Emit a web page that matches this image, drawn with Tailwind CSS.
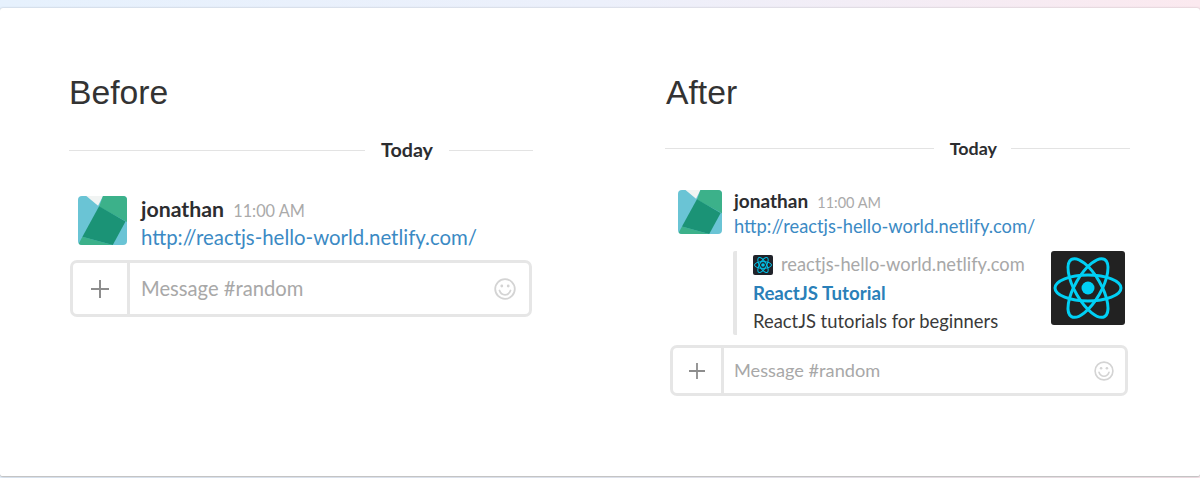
<!DOCTYPE html>
<html lang="en">
<head>
  <meta charset="UTF-8" />
  <title>Before and After</title>
  <script src="https://cdn.jsdelivr.net/npm/@tailwindcss/browser@4"></script>
</head>
<body class="w-[1200px] h-[478px] overflow-hidden bg-gradient-to-r from-[#e6f1fd] via-[#ecf0fb] to-[#fbe9ef] font-['Lato',sans-serif]">
  <div class="mt-2 h-[469px] bg-white rounded-[3px] border-b border-[#c4c4c4] shadow-[0_0_2px_rgba(0,0,0,0.25)] flex">

    <!-- Before -->
    <section class="w-[596px] pl-[69px] pt-[64px] shrink-0">
      <h2 class="font-['Liberation_Sans',sans-serif] text-[33.7px] leading-[40px] text-[#333]">Before</h2>

      <div class="flex items-center w-[464px] mt-[28px] h-[20px]">
        <div class="flex-1 border-t border-[#e3e3e3]"></div>
        <span class="px-4 text-[19.7px] font-bold text-[#2c2d30]">Today</span>
        <div class="w-[84px] border-t border-[#e3e3e3]"></div>
      </div>

      <div class="flex ml-[9px] mt-[36px]">
        <svg class="w-[49px] h-[49px] shrink-0 rounded-[4px]" viewBox="0 0 100 100">
          <rect width="100" height="100" fill="#6ac4d5" />
          <polygon points="17,0 51,0 41,20" fill="#f1f4f3" />
          <polygon points="51,0 100,0 100,53 43,22" fill="#3cb18a" />
          <polygon points="0,100 71,100 9,83" fill="#3cb18a" />
          <polygon points="43,21 97,52 71,100 9,83" fill="#1b9376" />
        </svg>
        <div class="ml-[14px]">
          <div class="leading-[26px] whitespace-nowrap">
            <span class="text-[21.3px] font-bold text-[#2c2d30]">jonathan</span>
            <span class="ml-[5px] text-[16.3px] text-[#aaa]">11:00 AM</span>
          </div>
          <div class="text-[20.4px] leading-[27px] text-[#3b8ac4] whitespace-nowrap">http://reactjs-hello-world.netlify.com/</div>
        </div>
      </div>

      <div class="flex items-stretch w-[462px] h-[57px] ml-[1px] mt-[9px] border-[3px] border-[#e6e6e6] rounded-[7px]">
        <div class="w-[57px] border-r-[3px] border-[#e6e6e6] flex items-center justify-center shrink-0">
          <svg class="w-5 h-5" viewBox="0 0 20 20"><path d="M10 1v18M1 10h18" stroke="#8d8d8d" stroke-width="2" /></svg>
        </div>
        <div class="flex-1 flex items-center pl-[11px] pr-[13px] text-[20.2px] text-[#a8a8a8]">
          <span class="flex-1">Message #random</span>
          <svg class="w-[22px] h-[22px]" viewBox="0 0 22 22" fill="none" stroke="#d4d4d4" stroke-width="1.8">
            <circle cx="11" cy="11" r="9.8" />
            <path d="M5.5 12.5c1 3 3.2 4.3 5.5 4.3s4.500-1.300 5.500-4.300" stroke-linecap="round" />
            <circle cx="7.800" cy="8" r="1.400" fill="#d4d4d4" stroke="none" />
            <circle cx="14.200" cy="8" r="1.400" fill="#d4d4d4" stroke="none" />
          </svg>
        </div>
      </div>
    </section>

    <!-- After -->
    <section class="flex-1 pt-[64px]">
      <h2 class="ml-[70px] font-['Liberation_Sans',sans-serif] text-[33.7px] leading-[40px] text-[#333]">After</h2>

      <div class="flex items-center w-[465px] ml-[69px] mt-[26px] h-[20px]">
        <div class="flex-1 border-t border-[#e3e3e3]"></div>
        <span class="pl-4 pr-[14px] text-[17.9px] font-bold text-[#2c2d30]">Today</span>
        <div class="w-[119px] border-t border-[#e3e3e3]"></div>
      </div>

      <div class="flex ml-[82px] mt-[32px]">
        <svg class="w-[44px] h-[44px] shrink-0 rounded-[4px]" viewBox="0 0 100 100">
          <rect width="100" height="100" fill="#6ac4d5" />
          <polygon points="17,0 51,0 41,20" fill="#f1f4f3" />
          <polygon points="51,0 100,0 100,53 43,22" fill="#3cb18a" />
          <polygon points="0,100 71,100 9,83" fill="#3cb18a" />
          <polygon points="43,21 97,52 71,100 9,83" fill="#1b9376" />
        </svg>
        <div class="ml-[12px] -mt-[1px]">
          <div class="leading-[24px] whitespace-nowrap">
            <span class="text-[19px] font-bold text-[#2c2d30]">jonathan</span>
            <span class="ml-[5px] text-[14.5px] text-[#aaa]">11:00 AM</span>
          </div>
          <div class="text-[18.3px] leading-[23px] text-[#3b8ac4] whitespace-nowrap">http://reactjs-hello-world.netlify.com/</div>
        </div>
      </div>

      <div class="flex ml-[137px] mt-[13px] w-[392px] h-[84px] border-l-[4px] border-[#e6e6e6] rounded-[2px] pl-[16px]">
        <div class="flex-1">
          <div class="flex items-center h-[28px]">
            <svg class="w-[20px] h-[20px] rounded-[2px]" viewBox="0 0 20 20" fill="none" stroke="#00c2e8" stroke-width="1">
              <rect width="20" height="20" fill="#20232a" stroke="none" />
              <ellipse cx="10" cy="10" rx="8.500" ry="3.400" />
              <ellipse cx="10" cy="10" rx="8.500" ry="3.400" transform="rotate(60 10 10)" />
              <ellipse cx="10" cy="10" rx="8.500" ry="3.400" transform="rotate(120 10 10)" />
              <circle cx="10" cy="10" r="1.800" fill="#00c2e8" stroke="none" />
            </svg>
            <span class="ml-[8px] text-[18.3px] text-[#a8a8a8] whitespace-nowrap">reactjs-hello-world.netlify.com</span>
          </div>
          <div class="text-[18.7px] font-bold leading-[28px] text-[#2a80b9]">ReactJS Tutorial</div>
          <div class="text-[18.4px] leading-[26px] mt-[1px] text-[#3a3a3a]">ReactJS tutorials for beginners</div>
        </div>
        <svg class="w-[74px] h-[74px] rounded-[3px] shrink-0" viewBox="0 0 74 74" fill="none" stroke="#00d0f5" stroke-width="3">
          <rect width="74" height="74" fill="#222" stroke="none" />
          <ellipse cx="37" cy="37" rx="33" ry="13" />
          <ellipse cx="37" cy="37" rx="33" ry="13" transform="rotate(60 37 37)" />
          <ellipse cx="37" cy="37" rx="33" ry="13" transform="rotate(120 37 37)" />
          <circle cx="37" cy="37" r="6.500" fill="#00d0f5" stroke="none" />
        </svg>
      </div>

      <div class="flex items-stretch w-[458px] h-[51px] ml-[74px] mt-[10px] border-[3px] border-[#e6e6e6] rounded-[7px]">
        <div class="w-[51px] border-r-[3px] border-[#e6e6e6] flex items-center justify-center shrink-0">
          <svg class="w-[18px] h-[18px]" viewBox="0 0 18 18"><path d="M9 1v16M1 9h16" stroke="#8d8d8d" stroke-width="1.800" /></svg>
        </div>
        <div class="flex-1 flex items-center pl-[10px] pr-[11px] text-[18.2px] text-[#a8a8a8]">
          <span class="flex-1">Message #random</span>
          <svg class="w-[20px] h-[20px]" viewBox="0 0 22 22" fill="none" stroke="#d4d4d4" stroke-width="1.800">
            <circle cx="11" cy="11" r="9.800" />
            <path d="M5.500 12.500c1 3 3.200 4.300 5.500 4.300s4.500-1.300 5.500-4.300" stroke-linecap="round" />
            <circle cx="7.800" cy="8" r="1.400" fill="#d4d4d4" stroke="none" />
            <circle cx="14.200" cy="8" r="1.400" fill="#d4d4d4" stroke="none" />
          </svg>
        </div>
      </div>
    </section>
  </div>
</body>
</html>
